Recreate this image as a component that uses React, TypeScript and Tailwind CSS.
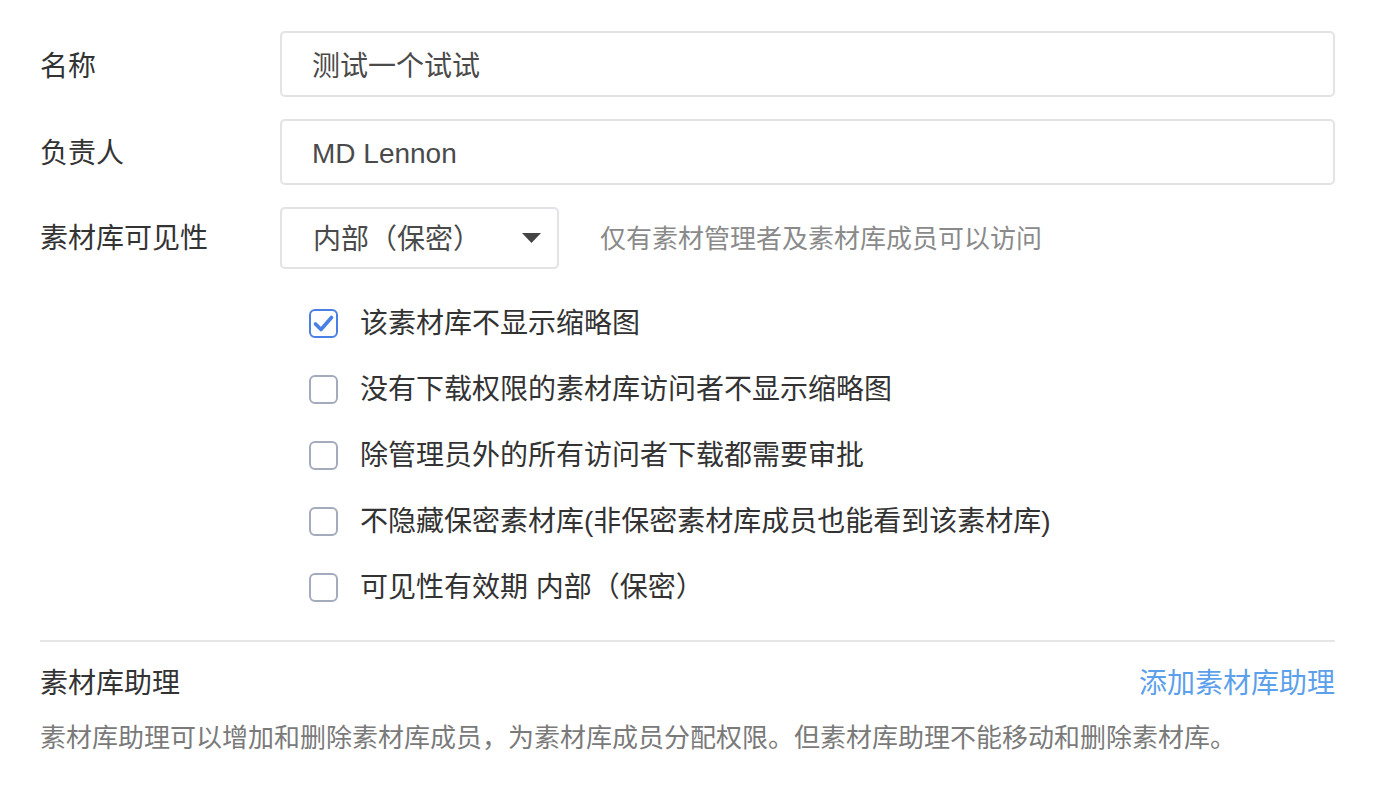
import { useState } from "react";

const font = "font-['Liberation_Sans','Noto_Sans_CJK_SC',sans-serif]";

const options = [
  { label: "该素材库不显示缩略图", checked: true },
  { label: "没有下载权限的素材库访问者不显示缩略图", checked: false },
  { label: "除管理员外的所有访问者下载都需要审批", checked: false },
  { label: "不隐藏保密素材库(非保密素材库成员也能看到该素材库)", checked: false },
  { label: "可见性有效期 内部（保密）", checked: false },
];

function Checkbox({ checked, onClick }: { checked: boolean; onClick: () => void }) {
  return (
    <button
      type="button"
      onClick={onClick}
      className={`w-[29px] h-[29px] shrink-0 rounded-[6px] border-2 bg-white flex items-center justify-center ${
        checked ? "border-[#4a80e6]" : "border-[#a3abbd]"
      }`}
    >
      {checked && (
        <svg width="25" height="25" viewBox="0 0 25 25" fill="none">
          <path
            d="M4.5 13 L10 18.5 L20.5 6.5"
            stroke="#4a80e6"
            strokeWidth="3.6"
            strokeLinecap="round"
            strokeLinejoin="round"
          />
        </svg>
      )}
    </button>
  );
}

export default function App() {
  const [checks, setChecks] = useState(options.map((o) => o.checked));

  const toggle = (i: number) => {
    setChecks(checks.map((c, j) => (j === i ? !c : c)));
  };

  return (
    <div className={`min-h-screen bg-white pl-[40px] pr-[55px] pt-[31px] ${font}`}>
      {/* 名称 */}
      <div className="flex items-center">
        <div className="w-[240px] pt-[5px] text-[28px] text-[#333]">名称</div>
        <div className="flex-1 h-[66px] border-2 border-[#e2e2e7] rounded-[5px] pl-[30px] pt-[5px] flex items-center text-[28px] text-[#4a4a4a]">
          测试一个试试
        </div>
      </div>

      {/* 负责人 */}
      <div className="flex items-center mt-[22px]">
        <div className="w-[240px] pt-[4px] text-[28px] text-[#333]">负责人</div>
        <div className="flex-1 h-[66px] border-2 border-[#e2e2e7] rounded-[5px] pl-[30px] pt-[3px] flex items-center text-[28px] text-[#4a4a4a]">
          MD Lennon
        </div>
      </div>

      {/* 可见性 */}
      <div className="flex items-center mt-[22px]">
        <div className="w-[240px] pt-[2px] text-[28px] text-[#333]">素材库可见性</div>
        <div className="w-[279px] h-[62px] border-2 border-[#e2e2e7] rounded-[5px] pl-[31px] pr-[16px] flex items-center justify-between text-[28px] text-[#4a4a4a]">
          <span className="pt-[3px]">内部（保密）</span>
          <svg width="19" height="10" viewBox="0 0 19 10">
            <path d="M0 0 H19 L9.5 10 Z" fill="#444" />
          </svg>
        </div>
        <div className="ml-[41px] pt-[2px] text-[26px] text-[#8a8a8a]">仅有素材管理者及素材库成员可以访问</div>
      </div>

      {/* options */}
      <div className="mt-[21px] ml-[269px]">
        {options.map((o, i) => (
          <div key={i} className="h-[66px] flex items-center gap-[22px]">
            <Checkbox checked={checks[i]} onClick={() => toggle(i)} />
            <span className="pt-[2px] text-[28px] text-[#333]">{o.label}</span>
          </div>
        ))}
      </div>

      <div className="mt-[20px] h-[2px] bg-[#e6e6e6]" />

      {/* 素材库助理 */}
      <div className="mt-[22px] flex items-center justify-between leading-[40px]">
        <span className="text-[28px] text-[#333]">素材库助理</span>
        <button type="button" className="text-[28px] text-[#5c9fea]">
          添加素材库助理
        </button>
      </div>
      <div className="mt-[14px] leading-[40px] text-[26px] text-[#7a7a7a]">
        素材库助理可以增加和删除素材库成员，为素材库成员分配权限。但素材库助理不能移动和删除素材库。
      </div>
    </div>
  );
}
